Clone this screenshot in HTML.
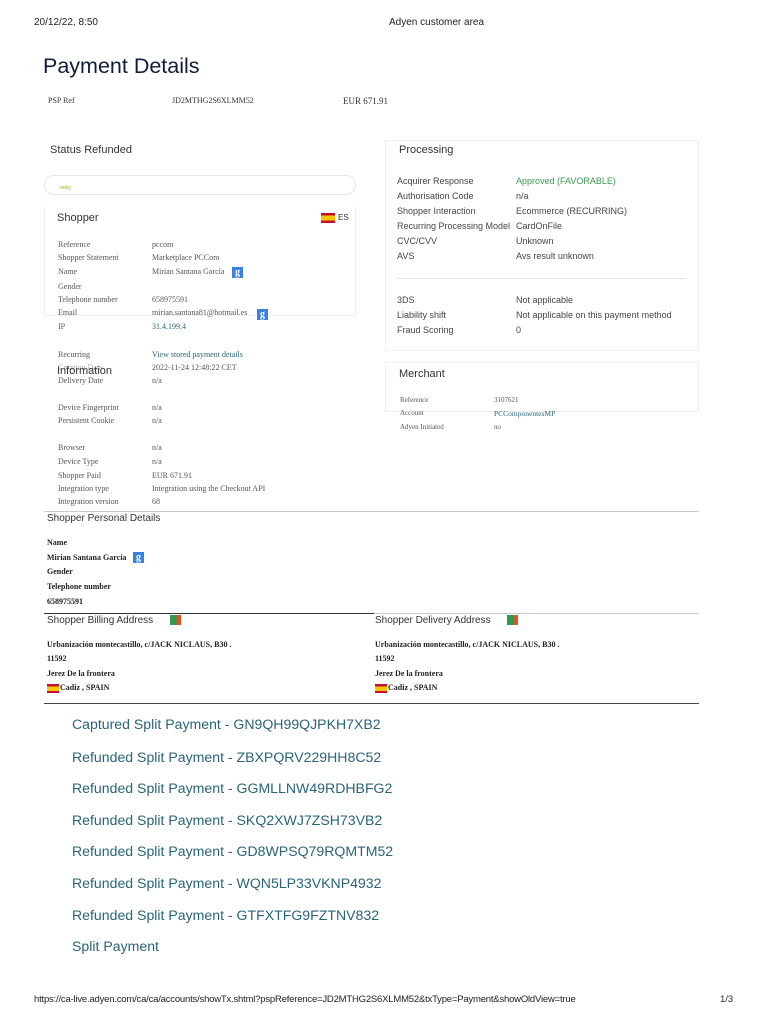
<!DOCTYPE html>
<html><head><meta charset="utf-8">
<style>
*{margin:0;padding:0;box-sizing:border-box}
body{width:768px;height:1024px;background:#fff;position:relative;overflow:hidden;font-family:"Liberation Sans",sans-serif;color:#333}
.a{position:absolute;white-space:nowrap;line-height:1}
.s{font-family:"Liberation Serif",serif;font-size:8px;color:#555}
.h{font-size:11px;color:#333}
.p{font-size:9px;color:#444}
.lk{font-size:14.1px;color:#2a6478;left:72px}
.g{position:absolute;width:11px;height:11px;background:#3b7fe0;color:#fff;font:bold 10px "Liberation Serif",serif;text-align:center;line-height:11px}
.fl{position:absolute;width:14px;height:10px;background:linear-gradient(#c8102e 0 25%,#f6c700 25% 75%,#c8102e 75%)}
.it{position:absolute;width:11px;height:10px;background:linear-gradient(90deg,#2e9a4a 0 60%,#d9532c 60%)}
.box{position:absolute;border:1px solid #eee}
.b{font-family:"Liberation Serif",serif;font-size:8px;color:#222;font-weight:600}
</style></head><body>
<div class="a" style="left:34px;top:18px;font-size:10px;color:#222">20/12/22, 8:50</div>
<div class="a" style="left:389px;top:18px;font-size:10px;color:#222">Adyen customer area</div>
<div class="a" style="left:43px;top:56px;font-size:21.5px;color:#0f1d3a">Payment Details</div>
<div class="a s" style="left:48px;top:97px;color:#333">PSP Ref</div>
<div class="a s" style="left:172px;top:97px;color:#333">JD2MTHG2S6XLMM52</div>
<div class="a s" style="left:343px;top:97px;font-size:9px;color:#333">EUR 671.91</div>

<div class="a h" style="left:50px;top:145px">Status Refunded</div>
<div class="box" style="left:44px;top:175px;width:312px;height:20px;border-radius:10px;border-color:#e6e6e6"></div>
<div class="a" style="left:60px;top:186px;font-size:5px;color:#8cb800">oney</div>
<div class="box" style="left:44px;top:206px;width:312px;height:110px;border-top:none;border-color:#f0f0f0"></div>
<div class="a h" style="left:57px;top:213px">Shopper</div>
<div class="fl" style="left:321px;top:213px"></div>
<div class="a" style="left:338px;top:214px;font-size:8px">ES</div>

<div class="a s" style="left:58px;top:241px">Reference</div><div class="a s" style="left:152px;top:241px">pccom</div>
<div class="a s" style="left:58px;top:254px">Shopper Statement</div><div class="a s" style="left:152px;top:254px">Marketplace PCCom</div>
<div class="a s" style="left:58px;top:268px">Name</div><div class="a s" style="left:152px;top:268px">Mirian Santana García</div><div class="g" style="left:232px;top:267px">g</div>
<div class="a s" style="left:58px;top:283px">Gender</div>
<div class="a s" style="left:58px;top:296px">Telephone number</div><div class="a s" style="left:152px;top:296px">658975591</div>
<div class="a s" style="left:58px;top:309px">Email</div><div class="a s" style="left:152px;top:309px">mirian.santana81@hotmail.es</div><div class="g" style="left:257px;top:309px">g</div>
<div class="a s" style="left:58px;top:323px">IP</div><div class="a s" style="left:152px;top:323px;color:#2a6478">31.4.199.4</div>

<div class="a s" style="left:58px;top:351px">Recurring</div><div class="a s" style="left:152px;top:351px;color:#2a6478">View stored payment details</div>
<div class="a s" style="left:58px;top:364px;color:#aaa">Creation Date</div><div class="a s" style="left:152px;top:364px">2022-11-24 12:48:22 CET</div>
<div class="a" style="left:57px;top:366px;font-size:11px;color:#333">Information</div>
<div class="a s" style="left:58px;top:377px">Delivery Date</div><div class="a s" style="left:152px;top:377px">n/a</div>
<div class="a s" style="left:58px;top:404px">Device Fingerprint</div><div class="a s" style="left:152px;top:404px">n/a</div>
<div class="a s" style="left:58px;top:417px">Persistent Cookie</div><div class="a s" style="left:152px;top:417px">n/a</div>
<div class="a s" style="left:58px;top:444px">Browser</div><div class="a s" style="left:152px;top:444px">n/a</div>
<div class="a s" style="left:58px;top:458px">Device Type</div><div class="a s" style="left:152px;top:458px">n/a</div>
<div class="a s" style="left:58px;top:472px">Shopper Paid</div><div class="a s" style="left:152px;top:472px">EUR 671.91</div>
<div class="a s" style="left:58px;top:485px">Integration type</div><div class="a s" style="left:152px;top:485px">Integration using the Checkout API</div>
<div class="a s" style="left:58px;top:498px">Integration version</div><div class="a s" style="left:152px;top:498px">68</div>

<div class="box" style="left:385px;top:140px;width:314px;height:211px"></div>
<div class="a h" style="left:399px;top:145px">Processing</div>
<div class="a p" style="left:397px;top:177px">Acquirer Response</div><div class="a p" style="left:516px;top:177px;color:#3a9a55">Approved (FAVORABLE)</div>
<div class="a p" style="left:397px;top:192px">Authorisation Code</div><div class="a p" style="left:516px;top:192px">n/a</div>
<div class="a p" style="left:397px;top:207px">Shopper Interaction</div><div class="a p" style="left:516px;top:207px">Ecommerce (RECURRING)</div>
<div class="a p" style="left:397px;top:222px">Recurring Processing Model</div><div class="a p" style="left:516px;top:222px">CardOnFile</div>
<div class="a p" style="left:397px;top:237px">CVC/CVV</div><div class="a p" style="left:516px;top:237px">Unknown</div>
<div class="a p" style="left:397px;top:252px">AVS</div><div class="a p" style="left:516px;top:252px">Avs result unknown</div>
<div class="a" style="left:397px;top:278px;width:289px;border-top:1px solid #e3e3e3"></div>
<div class="a p" style="left:397px;top:296px">3DS</div><div class="a p" style="left:516px;top:296px">Not applicable</div>
<div class="a p" style="left:397px;top:311px">Liability shift</div><div class="a p" style="left:516px;top:311px">Not applicable on this payment method</div>
<div class="a p" style="left:397px;top:326px">Fraud Scoring</div><div class="a p" style="left:516px;top:326px">0</div>

<div class="box" style="left:385px;top:362px;width:314px;height:50px;border-bottom-color:#eee"></div>
<div class="a h" style="left:399px;top:369px">Merchant</div>
<div class="a s" style="left:400px;top:397px;font-size:7px">Reference</div><div class="a s" style="left:494px;top:397px;font-size:7px">3107621</div>
<div class="a s" style="left:400px;top:410px;font-size:7px">Account</div><div class="a s" style="left:494px;top:410px;font-size:7.5px;color:#2a6478">PCComponentesMP</div>
<div class="a s" style="left:400px;top:424px;font-size:7px">Adyen Initiated</div><div class="a s" style="left:494px;top:424px;font-size:7px">no</div>

<div class="a" style="left:44px;top:511px;width:655px;border-top:1px solid #ccc"></div>
<div class="a" style="left:47px;top:514px;font-size:10px;color:#333">Shopper Personal Details</div>
<div class="a b" style="left:47px;top:539px">Name</div>
<div class="a b" style="left:47px;top:554px">Mirian Santana García</div><div class="g" style="left:133px;top:552px">g</div>
<div class="a b" style="left:47px;top:568px">Gender</div>
<div class="a b" style="left:47px;top:583px">Telephone number</div>
<div class="a b" style="left:47px;top:598px">658975591</div>
<div class="a" style="left:44px;top:613px;width:330px;border-top:1px solid #333"></div>
<div class="a" style="left:374px;top:613px;width:325px;border-top:1px solid #ccc"></div>
<div class="a" style="left:47px;top:616px;font-size:10px">Shopper Billing Address</div><div class="it" style="left:170px;top:615px"></div>
<div class="a" style="left:375px;top:616px;font-size:10px">Shopper Delivery Address</div><div class="it" style="left:507px;top:615px"></div>
<div class="a b" style="left:47px;top:641px">Urbanización montecastillo, c/JACK NICLAUS, B30 .</div>
<div class="a b" style="left:47px;top:655px">11592</div>
<div class="a b" style="left:47px;top:670px">Jerez De la frontera</div>
<div class="fl" style="left:47px;top:684px;width:12px;height:9px"></div><div class="a b" style="left:60px;top:684px">Cadiz , SPAIN</div>
<div class="a b" style="left:375px;top:641px">Urbanización montecastillo, c/JACK NICLAUS, B30 .</div>
<div class="a b" style="left:375px;top:655px">11592</div>
<div class="a b" style="left:375px;top:670px">Jerez De la frontera</div>
<div class="fl" style="left:375px;top:684px;width:12px;height:9px"></div><div class="a b" style="left:388px;top:684px">Cadiz , SPAIN</div>
<div class="a" style="left:44px;top:703px;width:655px;border-top:1px solid #444"></div>

<div class="a lk" style="top:717px">Captured Split Payment - GN9QH99QJPKH7XB2</div>
<div class="a lk" style="top:750px">Refunded Split Payment - ZBXPQRV229HH8C52</div>
<div class="a lk" style="top:781px">Refunded Split Payment - GGMLLNW49RDHBFG2</div>
<div class="a lk" style="top:813px">Refunded Split Payment - SKQ2XWJ7ZSH73VB2</div>
<div class="a lk" style="top:844px">Refunded Split Payment - GD8WPSQ79RQMTM52</div>
<div class="a lk" style="top:876px">Refunded Split Payment - WQN5LP33VKNP4932</div>
<div class="a lk" style="top:908px">Refunded Split Payment - GTFXTFG9FZTNV832</div>
<div class="a lk" style="top:939px">Split Payment</div>

<div class="a" style="left:34px;top:995px;font-size:9.5px;color:#222;letter-spacing:-0.2px">https://ca-live.adyen.com/ca/ca/accounts/showTx.shtml?pspReference=JD2MTHG2S6XLMM52&amp;txType=Payment&amp;showOldView=true</div>
<div class="a" style="left:720px;top:995px;font-size:9.5px;color:#222">1/3</div>
</body></html>
